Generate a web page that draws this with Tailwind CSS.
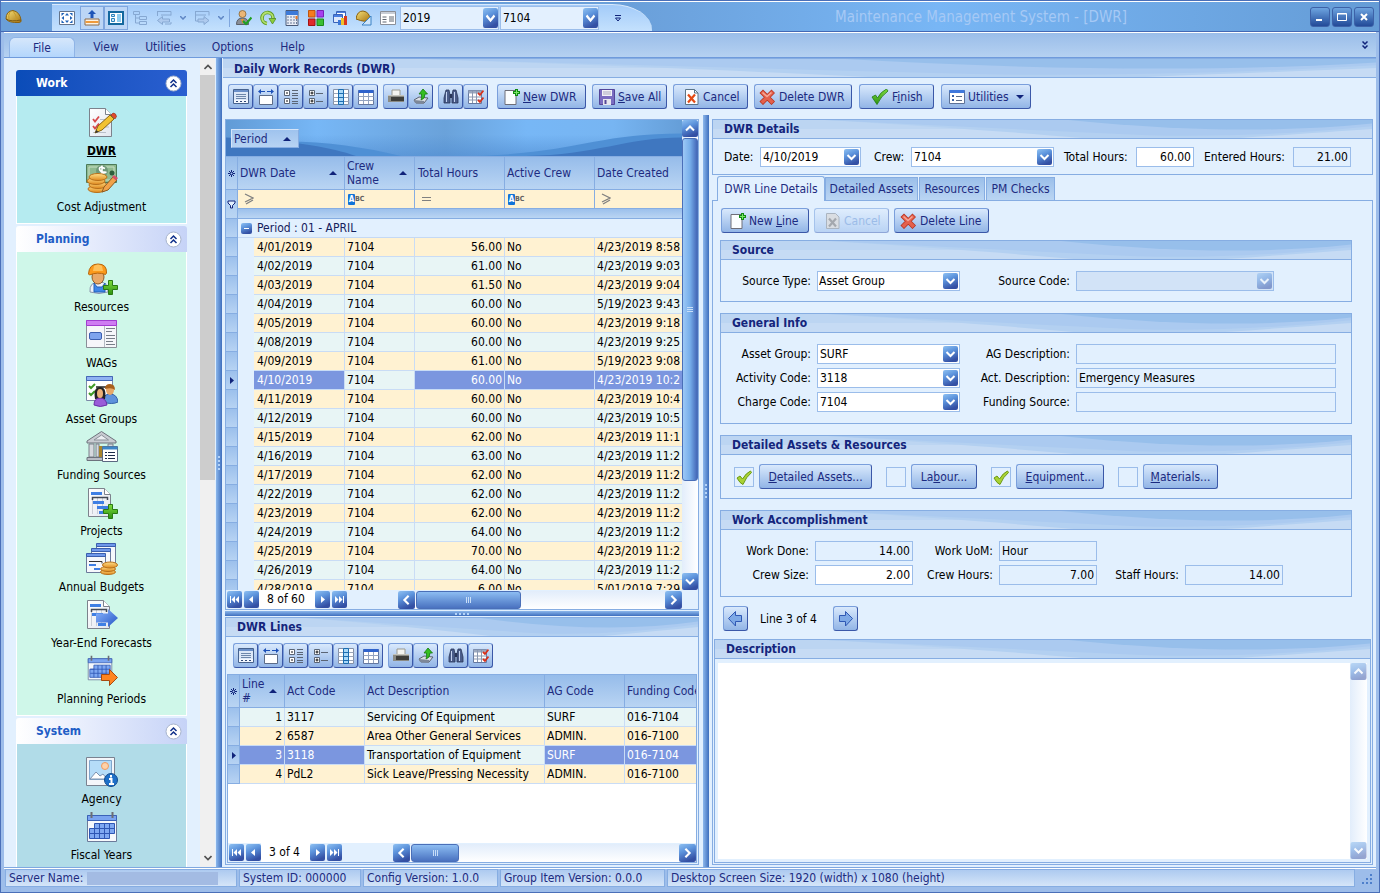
<!DOCTYPE html>
<html lang="en">
<head>
  <meta charset="UTF-8" />
  <meta name="viewport" content="width=device-width, initial-scale=1.0" />
  <title>Maintenance Management System - [DWR]</title>
  <script src="https://cdn.jsdelivr.net/npm/@tailwindcss/browser@4"></script>
</head>
<body class="h-screen flex flex-col overflow-hidden bg-[#9dbdea] border border-[#4a6fb8] text-[12px] leading-4 text-black font-['DejaVu_Sans_Condensed','Noto_Sans',sans-serif]">

  <!-- icon sprites -->
  <svg class="absolute w-0 h-0" aria-hidden="true">
    <defs>
      <linearGradient id="gCap" x1="0" y1="0" x2=".4" y2="1"><stop offset="0" stop-color="#8fc1f2"/><stop offset=".45" stop-color="#5c93dc"/><stop offset="1" stop-color="#3450a4"/></linearGradient>
      <linearGradient id="gGold" x1="0" y1="0" x2="0" y2="1"><stop offset="0" stop-color="#ffe08a"/><stop offset="1" stop-color="#e08a1e"/></linearGradient>
      <linearGradient id="gHat" x1="0" y1="0" x2="1" y2="1"><stop offset="0" stop-color="#f6e27a"/><stop offset="1" stop-color="#a87412"/></linearGradient>
      <linearGradient id="gGreen" x1="0" y1="0" x2="0" y2="1"><stop offset="0" stop-color="#7fdc3e"/><stop offset="1" stop-color="#2d9210"/></linearGradient>
      <linearGradient id="gBlue" x1="0" y1="0" x2="1" y2="1"><stop offset="0" stop-color="#8db8ff"/><stop offset="1" stop-color="#2454c4"/></linearGradient>
      <linearGradient id="gPage" x1="0" y1="0" x2="1" y2="1"><stop offset="0" stop-color="#fff"/><stop offset="1" stop-color="#e2e6ee"/></linearGradient>
      <linearGradient id="gPanel" x1="0" y1="0" x2="1" y2="0"><stop offset="0" stop-color="#619bd6"/><stop offset=".2" stop-color="#77b7f6"/><stop offset=".48" stop-color="#6aa2da"/><stop offset=".66" stop-color="#77b7f6"/><stop offset=".85" stop-color="#77b5f2"/><stop offset="1" stop-color="#659ed8"/></linearGradient>
      <linearGradient id="gShade" x1="0" y1="0" x2="0" y2="1"><stop offset=".4" stop-color="#4f8bd0" stop-opacity="0"/><stop offset="1" stop-color="#4f8bd0" stop-opacity=".6"/></linearGradient>
    </defs>

    <symbol id="wave" viewBox="0 0 100 20" preserveAspectRatio="none">
      <path d="M0 0H100V20H0z" fill="#bcd5f2"/>
      <path d="M0 10H100V20H0z" fill="#c6dbf4"/>
      <path d="M17 0H100V10Q92 14 80 20H56Q40 10 17 0z" fill="#b3d0f1"/>
      <path d="M17 0H100V7Q82 20 66 17Q42 9 17 0z" fill="#abcaf0"/>
      <path d="M54 0H100V4Q80 19 54 0z" fill="#97bfeb"/>
    </symbol>
    <symbol id="groupwave" viewBox="0 0 456 37" preserveAspectRatio="none">
      <path d="M0 0H456V37H0z" fill="url(#gPanel)"/>
      <path d="M0 0H456V37H0z" fill="url(#gShade)"/>
      <path d="M60 22C100 22 140 28 175 37H60zM250 37C350 34 370 14 456 14V37z" fill="#4f90d5"/>
      <path d="M0 18C50 20 100 26 130 37H0zM300 37C370 36 400 18 456 18V37z" fill="#3f77c0"/>
    </symbol>

    <symbol id="drop" viewBox="0 0 15 16"><rect width="15" height="16" rx="2" fill="url(#gCap)"/><path d="M3.500 6l4 4 4-4" fill="none" stroke="#fff" stroke-width="2"/></symbol>
    <symbol id="capUp" viewBox="0 0 16 17"><rect width="16" height="17" rx="2" fill="url(#gCap)"/><path d="M4 10.500l4-4 4 4" fill="none" stroke="#fff" stroke-width="2"/></symbol>
    <symbol id="capDown" viewBox="0 0 16 17"><rect width="16" height="17" rx="2" fill="url(#gCap)"/><path d="M4 6.500l4 4 4-4" fill="none" stroke="#fff" stroke-width="2"/></symbol>
    <symbol id="capLeft" viewBox="0 0 16 17"><rect width="16" height="17" rx="2" fill="url(#gCap)"/><path d="M10 4.500l-4 4 4 4" fill="none" stroke="#fff" stroke-width="2"/></symbol>
    <symbol id="capRight" viewBox="0 0 16 17"><rect width="16" height="17" rx="2" fill="url(#gCap)"/><path d="M6 4.500l4 4-4 4" fill="none" stroke="#fff" stroke-width="2"/></symbol>
    <symbol id="navFirst" viewBox="0 0 15 17"><rect width="15" height="17" rx="2" fill="url(#gCap)"/><path d="M3 5h1v7H3zM8 5v7L4.500 8.500zM12 5v7L8.500 8.500z" fill="#fff"/></symbol>
    <symbol id="navPrev" viewBox="0 0 15 17"><rect width="15" height="17" rx="2" fill="url(#gCap)"/><path d="M9 5v7L5 8.500z" fill="#fff"/></symbol>
    <symbol id="navNext" viewBox="0 0 15 17"><rect width="15" height="17" rx="2" fill="url(#gCap)"/><path d="M6 5v7l4-3.500z" fill="#fff"/></symbol>
    <symbol id="navLast" viewBox="0 0 15 17"><rect width="15" height="17" rx="2" fill="url(#gCap)"/><path d="M11 5h1v7h-1zM3 5v7l3.500-3.500zM7 5v7l3.500-3.500z" fill="#fff"/></symbol>
    <symbol id="sortUp" viewBox="0 0 8 4"><path d="M4 0l4 4H0z" fill="#10237a"/></symbol>
    <symbol id="star" viewBox="0 0 9 9"><path d="M4.500 1v7M1 4.500h7M2 2l5 5M7 2L2 7" stroke="#10237a" stroke-width="1"/><circle cx="4.500" cy="4.500" r="1" fill="#a9c9ef"/></symbol>

    <!-- 16px toolbar icons -->
    <symbol id="hat" viewBox="0 0 18 18"><path d="M1 11Q1 3 8 2.500Q15 4 16 12Q17 14 14 14.500Q4 15 1 11z" fill="url(#gHat)" stroke="#8a6210"/><path d="M5 4Q3 7 4 11M8 3q3 3 4 9" fill="none" stroke="#c79a2a"/><path d="M1 11q5 3 15 1" fill="none" stroke="#7b5a14"/></symbol>
    <symbol id="fit" viewBox="0 0 16 16"><path d="M.5 1.500h15v13H.5z" fill="#fff" stroke="#64748b"/><path d="M8 3l2 2.500H6zM8 13l2-2.500H6zM2.500 8l2.500-2v4zM13.500 8L11 6v4zM2.500 3h3l-3 3zM13.500 3h-3l3 3zM2.500 13h3l-3-3zM13.500 13h-3l3-3z" fill="#1e62b8"/></symbol>
    <symbol id="outbox" viewBox="0 0 16 16"><path d="M1 9h14v6H1z" fill="#fdf3e4" stroke="#8a6a4a"/><path d="M1.500 11h13v2h-13z" fill="#ef9a3c"/><path d="M8 0l4 4H9.500v4h-3V4H4z" fill="#1d55b8"/></symbol>
    <symbol id="sidepane" viewBox="0 0 16 16"><path d="M1 2h14v12H1z" fill="#fff" stroke="#14689e" stroke-width="2"/><path d="M3.500 4.500h3v2h-3zM3.500 8.500h3v3h-3z" fill="#cde6f7" stroke="#2c83bd"/><path d="M9 4h4v8H9z" fill="#8fcdf0"/></symbol>
    <symbol id="treeg" viewBox="0 0 16 16"><path d="M1.500 1.500h6v3h-6zM7.500 6.500h7v3h-7zM7.500 11.500h7v3h-7zM3.500 5v8H7M3.500 8H7" fill="none" stroke="#86a8d2"/></symbol>
    <symbol id="winback" viewBox="0 0 16 16"><path d="M1 1.500h14v4M1.500 2v4M5 5h10M15 12v2H9" fill="none" stroke="#86a8d2"/><path d="M1.500 10.500l5-4v2.500h7v3h-7V14.500z" fill="#aecaee" stroke="#86a8d2"/></symbol>
    <symbol id="winfwd" viewBox="0 0 16 16"><path d="M1 1.500h14v4M1.500 2v9H4M2 5h10" fill="none" stroke="#86a8d2"/><path d="M15 10.500l-5-4v2.500H4v3h6v2.500z" fill="#aecaee" stroke="#86a8d2"/></symbol>
    <symbol id="usercheck" viewBox="0 0 16 16"><path d="M.5 14.500Q.5 8 6.500 8t6 6.500z" fill="#8a8f98" stroke="#5b6068"/><path d="M5 9l1.500 5L8 9z" fill="#e9952c"/><circle cx="6.500" cy="4" r="3.500" fill="#eab676" stroke="#8a6430" stroke-width=".8"/><path d="M7 11l3 3L15.500 7.500" fill="none" stroke="#21a022" stroke-width="2.200"/></symbol>
    <symbol id="refresh" viewBox="0 0 16 16"><path d="M7 13.500A5.500 5.500 0 1 1 13 8.500" fill="none" stroke="#5c9a20" stroke-width="3.600"/><path d="M7 13.500A5.500 5.500 0 1 1 13 8.500" fill="none" stroke="#b4e070" stroke-width="1.800"/><path d="M9 8.500h7L12.500 14z" fill="#8ccc3c" stroke="#4a8718" stroke-width=".7"/></symbol>
    <symbol id="calc" viewBox="0 0 16 16"><path d="M2 .5h12v15H2z" fill="#e7ecf5" stroke="#4a5a78"/><path d="M2 1h12v4H2z" fill="#3d7ad8"/><path d="M4 6v9M7 6v9M10 6v9M12.500 6v9" stroke="#6d7d9a" stroke-dasharray="2 1"/><path d="M11.500 6h2v3h-2z" fill="#e87a2a"/></symbol>
    <symbol id="tiles" viewBox="0 0 16 16"><path d="M.5.500h6.500v6.500H.5z" fill="#f57c1f" stroke="#c05510"/><path d="M9 .5h6.500v6.500H9z" fill="#a63ff0" stroke="#7920b5"/><path d="M.5 9H7v6.500H.5z" fill="#e02a2a" stroke="#a31313"/><path d="M9 9h6.500v6.500H9z" fill="#3bbf34" stroke="#1d8a1a"/></symbol>
    <symbol id="cascade" viewBox="0 0 16 16"><path d="M4.500 1.500h9v8h-9z" fill="#fff" stroke="#3a63b8"/><path d="M1.500 4.500h9v8h-9z" fill="#dfe9fb" stroke="#3a63b8"/><path d="M2 5h8v2H2zM5 2h8v1H5z" fill="#4b7fe0"/><path d="M9 8h3v7H9z" fill="#f0c22a"/><path d="M12 6h3v9h-3z" fill="#d8391e"/><path d="M6 10h3v5H6z" fill="#3c77d8"/></symbol>
    <symbol id="hatruler" viewBox="0 0 16 16"><path d="M0 9Q1 1 7 1Q14 2 14 10Q10 13 0 9z" fill="url(#gHat)" stroke="#8a6210"/><path d="M15 6v9H6z" fill="#cfe6fb" stroke="#3b82c4"/></symbol>
    <symbol id="form" viewBox="0 0 16 16"><path d="M.5 1.500h15v13H.5z" fill="#fff" stroke="#8a8f98"/><path d="M1 2h14v2H1z" fill="#c9ced6"/><path d="M2.500 7h4M2.500 9.500h4M9 7h5M9 9h5M9 11h5M2.500 12h4" stroke="#5f6670"/></symbol>

    <symbol id="t1" viewBox="0 0 16 16"><path d="M.5.500h15v14H.5z" fill="#dce8f8" stroke="#46628e"/><path d="M1 1h14v2H1z" fill="#6a8fc8"/><path d="M3 5.500h10M3 7.500h10M3 9.500h10" stroke="#6d87ab"/><path d="M1 11h14v3H1z" fill="#f4f8ff"/><path d="M3 12.500h10" stroke="#2f4a78" stroke-dasharray="2 2"/></symbol>
    <symbol id="t2" viewBox="0 0 16 16"><path d="M1.500 6.500h13v9h-13z" fill="#fff" stroke="#5c6c88"/><path d="M0 2.500L3 0v2h4v1H3v2zM16 2.500L13 0v2H9v1h4v2z" fill="#1c50b8"/></symbol>
    <symbol id="t3" viewBox="0 0 16 16"><path d="M1.500 1.500h5v5h-5zM1.500 9.500h5v5h-5z" fill="#fff" stroke="#5a6575"/><path d="M3 4h2M3 12h2" stroke="#111"/><path d="M9 1.500h6M9 4.500h6M9 6.500h6M9 9.500h6M9 12.500h6M9 14.500h6" stroke="#5a6575"/></symbol>
    <symbol id="t4" viewBox="0 0 16 16"><path d="M1.500 1.500h5v5h-5zM1.500 9.500h5v5h-5z" fill="#fff" stroke="#5a6575"/><path d="M2.500 4h3M4 2.500v3M2.500 12h3M4 10.500v3" stroke="#111"/><path d="M8 4.500h7M8 12.500h7" stroke="#5a6575"/></symbol>
    <symbol id="t5" viewBox="0 0 16 16"><path d="M.5.500h15v15H.5z" fill="#fff" stroke="#8592a8"/><path d="M.5 4.500h15M.5 8.500h15M.5 12.500h15" stroke="#9aa5b8"/><path d="M5.500.500h5v15h-5z" fill="#a8d8f8" stroke="#1a6cb0"/><path d="M5.500 4.500h5M5.500 8.500h5M5.500 12.500h5" stroke="#1a6cb0"/></symbol>
    <symbol id="t6" viewBox="0 0 16 16"><path d="M.5 1.500h15v14H.5z" fill="#fff" stroke="#6478a0"/><path d="M.5 1h15v3H.5z" fill="#2f63cc"/><path d="M.5 7.500h15M.5 11.500h15M5.500 4v11M10.500 4v11" stroke="#93a3c0"/></symbol>
    <symbol id="print" viewBox="0 0 16 16"><path d="M4 1h8v6H4z" fill="#f4f4f0" stroke="#9a9a90"/><path d="M0 6h16v7H0z" fill="#8b8b84"/><path d="M3 8h13v4H3z" fill="#3e3e3a"/><path d="M0 6.500h16" stroke="#c4c4bc"/></symbol>
    <symbol id="export" viewBox="0 0 16 16"><path d="M1 11l5-3 9 1-4 5H3z" fill="#d8dce4" stroke="#5a6270"/><path d="M1 11l10 1v3l-9-1z" fill="#7d8798"/><path d="M10 0l4.500 5H12q0 5-4 6 1-2 .5-6H6z" fill="#35bf22" stroke="#157a0c" stroke-width=".8"/></symbol>
    <symbol id="binoc" viewBox="0 0 16 16"><path d="M3 1h3l1 5v8H1V9zM10 1h3l2 8v5H9V6z" fill="#4b5d8a" stroke="#2a3658" stroke-width=".8"/><path d="M7 5h2v4H7z" fill="#2a3658"/><path d="M3.500 3v10M11.500 3v10" stroke="#c5d3f0"/></symbol>
    <symbol id="gridcheck" viewBox="0 0 16 16"><path d="M.5 1.500h13v13H.5z" fill="#fff" stroke="#6478a0"/><path d="M.5 1.500h13v3H.5z" fill="#9aa8bf"/><path d="M.5 8h13M.5 11h13M4.500 2v12M8.500 2v12" stroke="#8a98b0"/><path d="M10 4l2 2 3.500-4.500M10 11l2 2 3.500-4.500" fill="none" stroke="#d8301a" stroke-width="1.800"/></symbol>
    <symbol id="newdoc" viewBox="0 0 16 16"><path d="M1 1.500h11v14H1z" fill="#fbfdff" stroke="#6e6e78"/><path d="M11 0h3v2h2v3h-2v2h-3V5H9V2h2z" fill="#128a12"/><path d="M12 1h1v2h2v1h-2v2h-1V4h-2V3h2z" fill="#7be868"/></symbol>
    <symbol id="save" viewBox="0 0 16 16"><path d="M.5.500h15v15H.5z" fill="#7a6cc0" stroke="#544699"/><path d="M3 1h10v6H3z" fill="#f2f2f8"/><path d="M4 3h8M4 5h8" stroke="#a9a9be"/><path d="M4 10h8v6H4z" fill="#e6e6ee"/><path d="M5.500 11h2v4h-2z" fill="#544699"/></symbol>
    <symbol id="cancel" viewBox="0 0 16 16"><path d="M1.500.500h9l3.500 3.500v11.500H1.500z" fill="#fdfdff" stroke="#5a7488"/><path d="M10.500.500V4H14" fill="none" stroke="#5a7488"/><path d="M4 5.500l7 8M11 5.500l-7 8" stroke="#e34a14" stroke-width="2.200"/></symbol>
    <symbol id="cancelg" viewBox="0 0 16 16"><path d="M1.500.500h9l3.500 3.500v11.500H1.500z" fill="#d9dde2" stroke="#aab4c0"/><path d="M4 5.500l7 8M11 5.500l-7 8" stroke="#a4a8ae" stroke-width="2.200"/></symbol>
    <symbol id="delete" viewBox="0 0 16 16"><path d="M4 4l8.500 8.500M12.500 4L4 12.500" stroke="#b5321f" stroke-width="5" stroke-linecap="square"/><path d="M4 4l8.500 8.500M12.500 4L4 12.500" stroke="#e4604c" stroke-width="3.600" stroke-linecap="square"/><path d="M3.500 3.500l4.500 4 4.500-4" fill="none" stroke="#f6a696" stroke-width="1.600"/></symbol>
    <symbol id="finish" viewBox="0 0 18 16"><path d="M1 8l5 7.500Q10 7 17 2l-1.500-2Q9.500 3 6.500 9L4.500 6z" fill="url(#gGreen)" stroke="#1f7a10" stroke-width=".8"/></symbol>
    <symbol id="utils" viewBox="0 0 16 16"><path d="M.5 1.500h15v13H.5z" fill="#fff" stroke="#5d7298"/><path d="M.5 1h15v3H.5z" fill="#3f78dc"/><path d="M3 7h2M3 11h2" stroke="#3a63a8" stroke-width="2"/><path d="M7 7.500h6M7 11.500h6" stroke="#5a6a85"/></symbol>
    <symbol id="tick" viewBox="0 0 18 18"><path d="M2 10l3-2 2.500 3Q11 5 15.500 3l1 1.500Q11 9 8 16.500q-3-1-6-6.500z" fill="#a9d234" stroke="#6b9a12"/></symbol>
    <symbol id="arrL" viewBox="0 0 17 17"><path d="M1.500 8.500l7-7v4h6v6h-6v4.500z" fill="#7ea9e6" stroke="#2f58b4"/></symbol>
    <symbol id="arrR" viewBox="0 0 17 17"><path d="M15.500 8.500l-7-7v4h-6v6h6v4.500z" fill="#7ea9e6" stroke="#2f58b4"/></symbol>

    <!-- 32px sidebar icons -->
    <symbol id="page" viewBox="0 0 32 32"><path d="M3.500 1.500h16l6 6v22h-22z" fill="url(#gPage)" stroke="#7c828c"/><path d="M19.500 1.500v6h6" fill="#fff" stroke="#7c828c"/></symbol>
    <symbol id="coins" viewBox="0 0 32 32"><g fill="url(#gGold)" stroke="#b8701a"><ellipse cx="11" cy="26" rx="9" ry="3.500"/><ellipse cx="12" cy="22" rx="9" ry="3.500"/><ellipse cx="10" cy="18" rx="9" ry="3.500"/><ellipse cx="12" cy="14" rx="9" ry="3.500"/></g></symbol>
    <symbol id="gantt" viewBox="0 0 32 32"><use href="#page"/><path d="M7.500 10v17M12.500 10v17M17.500 10v17" stroke="#c9cdd6"/><path d="M7.500 13v-2.500h15V13" fill="none" stroke="#444a56" stroke-width="1.500"/><path d="M6 5h11v3H6zM8 14h11v3H8zM12 19h11v3H12zM14 24h8v3h-8z" fill="#3f7fe4"/></symbol>
    <symbol id="plus" viewBox="0 0 32 32"><path d="M22.500 17.500h4v5h5v4h-5v5h-4v-5h-5v-4h5z" fill="url(#gGreen)" stroke="#2a7a12"/></symbol>
    <symbol id="calendar" viewBox="0 0 32 32"><path d="M1.500 4.500h29v26h-29z" fill="#f6f8fc" stroke="#6b7a9a"/><path d="M1.500 4.500h29v5h-29z" fill="#7aa4f0" stroke="#3b62b8"/><path d="M5.500 1v6M26.500 1v6" stroke="#6d6d75" stroke-width="2"/><path d="M8.500 12.500h20v10h-5v5h-20v-10h5z" fill="#7fa8f2" stroke="#2e56b4"/><path d="M13.500 12.500v15M18.500 12.500v15M23.500 12.500v10M8.500 17v10.500M4 17.500h24.500M4 22.500h20" stroke="#2e56b4" fill="none"/></symbol>

    <symbol id="s-dwr" viewBox="0 0 32 32"><use href="#page"/><path d="M7 12l2 2.500 4-5M7 19l2 2.500 4-5" fill="none" stroke="#d8484a" stroke-width="1.800"/><path d="M14 12.500h9M14 20h9M7 25.500h13" stroke="#b9bfca"/><path d="M9 26l3-7 12-11 4 4-12 11z" fill="#f2c232" stroke="#8a6414"/><path d="M25 8l2-2q3 0 3.500 3.500L29 12z" fill="#e2492c" stroke="#8f2a18" stroke-width=".6"/><path d="M9 26l1.500-3 2 2z" fill="#333"/></symbol>
    <symbol id="s-cost" viewBox="0 0 32 32"><path d="M.5 1.500h30v18H.5z" fill="#8fba90" stroke="#4c7a58"/><path d="M3 4h25v13H3z" fill="none" stroke="#c8dfc4"/><circle cx="16" cy="8" r="6" fill="#6f9878"/><path d="M19 5.500Q13 3 13.500 6T18.500 9T13 11M16 2.500v11" fill="none" stroke="#fff" stroke-width="1.600"/><circle cx="26" cy="10" r="2.500" fill="#2f5d3c"/><use href="#coins"/><path d="M16 29l2-5 9-10 4 3-9 10z" fill="#f0a24a" stroke="#8f5a1e"/><path d="M26 14l2-2 4 3-2 2.500z" fill="#d8506a"/></symbol>
    <symbol id="s-res" viewBox="0 0 32 32"><path d="M4 29q-1-10 9-10t9 10q-9 3-18 0z" fill="#eef2fa" stroke="#8793aa"/><path d="M8 20v9h11v-9l-3 4h-5z" fill="#3f86e8" stroke="#2360b8"/><ellipse cx="12" cy="14" rx="6" ry="7" fill="#e9a868" stroke="#8f5a28"/><path d="M2.500 11Q3 1 12 1T20.500 10l-1 1.500q-8-3-16 .5z" fill="#fb9a1c" stroke="#b8640a"/><path d="M8 3q4-3 8 0l1 5H7z" fill="#ffc05a"/><use href="#plus"/></symbol>
    <symbol id="s-wag" viewBox="0 0 32 32"><path d="M.5 1.500h30v27H.5z" fill="#f6f6fa" stroke="#8a8f98"/><path d="M.5 1.500h30v5H.5z" fill="#cf7cf2" stroke="#a23cd0"/><path d="M18.500 7v21" stroke="#b5bac4"/><rect x="3.500" y="13.500" width="12" height="7" rx="1.500" fill="#7fa4ee" stroke="#3c5fb0"/><path d="M20 9.500h9M20 12.500h6M20 16.500h9M20 19.500h9M20 22.500h7M20 25.500h9" stroke="#777d88"/></symbol>
    <symbol id="s-asset" viewBox="0 0 32 32"><path d="M.5 1.500h26v24H.5z" fill="#fff" stroke="#7c8aa8"/><path d="M.5 1.500h26v4H.5z" fill="#8fb2f2" stroke="#4568b8"/><path d="M3 11l2 2 4-4M3 18l2 2 4-4" fill="none" stroke="#3f9a26" stroke-width="2"/><path d="M10 12h10" stroke="#222" stroke-width="1.500"/><path d="M17 27q0-8 7-8t8 8q-6 3-15 0z" fill="#5f92dc" stroke="#3461a8"/><ellipse cx="24" cy="15" rx="4" ry="5" fill="#e9a868"/><path d="M19 14q0-5 5-5t5 6q-3-3-10-1z" fill="#a8601c"/><path d="M9 24Q7 12 14 12T19 24z" fill="#222"/><path d="M8 30q0-7 6-7t7 7q-7 3-13 0z" fill="#9a5cd8" stroke="#6a30a8"/><ellipse cx="14" cy="18.500" rx="3" ry="4.500" fill="#eab078"/></symbol>
    <symbol id="s-fund" viewBox="0 0 32 32"><path d="M1 10L15.500.500 30 10v2H1z" fill="#c9ccd2" stroke="#6d727c"/><path d="M8 9l7.500-5 7 5z" fill="#eceef2" stroke="#8b9099"/><path d="M3 13h5v13H3zM22 13h5v13h-5zM10 13h3v13h-3z" fill="#d6d9de" stroke="#7b808a"/><path d="M13 15h6v11h-6z" fill="#a8842c"/><path d="M1 26.500h28v3H1z" fill="#b9bdc5" stroke="#6d727c"/><path d="M16.500 15.500h15v15h-15z" fill="#fff" stroke="#5b6880"/><path d="M16.500 15.500h15v3h-15z" fill="#3d86c8"/><path d="M19 21.500h2M19 24.500h2M19 27.500h2M22 21.500h7M22 24.500h7M22 27.500h7" stroke="#1c2c48"/></symbol>
    <symbol id="s-proj" viewBox="0 0 32 32"><use href="#gantt" x="-1"/><use href="#plus"/></symbol>
    <symbol id="s-annual" viewBox="0 0 32 32"><g fill="#f6f8fc" stroke="#6b7a9a"><path d="M10.500 1.500h19v19h-19z"/><path d="M5.500 6.500h19v19h-19z"/><path d="M.5 11.500h19v18H.5z"/></g><g fill="#6f98ea" stroke="#3b5fae"><path d="M10.500.500h19v3h-19zM5.500 5.500h19v3h-19zM.5 10.500h19v3H.5z"/></g><path d="M3 18.500h13v2" fill="none" stroke="#333"/><path d="M3 21h7v2H3zM8 25h6v2H8z" fill="#3f7fe4"/><g fill="url(#gGold)" stroke="#b8701a"><ellipse cx="22" cy="29" rx="7.500" ry="2.500"/><ellipse cx="22" cy="26" rx="7.500" ry="2.500"/><ellipse cx="24" cy="22" rx="7.500" ry="3"/></g></symbol>
    <symbol id="s-year" viewBox="0 0 32 32"><use href="#gantt" x="-2"/><path d="M10 14.500h12V10l10 9-10 9v-4.500H10z" fill="url(#gBlue)"/></symbol>
    <symbol id="s-period" viewBox="0 0 32 32"><use href="#calendar" width="26" height="26" x="1"/><path d="M15.500 19.500h8v-5l8 8-8 8v-5h-8z" fill="#ff8420" stroke="#a84a10"/></symbol>
    <symbol id="s-agency" viewBox="0 0 32 32"><path d="M.5 2.500h28v28H.5z" fill="#f4f6fa" stroke="#7a8290"/><path d="M3.500 5.500h22v19h-22z" fill="#b5dcf8" stroke="#7fa6cc"/><circle cx="19" cy="11" r="3.500" fill="#ffd2a8" stroke="#ee9a60"/><path d="M4 24l6-7 4 4 3-2 4 5z" fill="#fff" stroke="#7f93b0"/><circle cx="25" cy="25" r="6.500" fill="#1e6fc8" stroke="#124b8e"/><path d="M25 20v2.500M23 24h2.500v5M23 29h5" stroke="#fff" stroke-width="2" fill="none"/></symbol>
    <symbol id="s-fiscal" viewBox="0 0 32 32"><use href="#calendar"/></symbol>
  </svg>

  <!-- title bar -->
  <header class="flex items-stretch h-[31px] shrink-0 border-t border-white border-b border-b-[#4468b4] bg-linear-to-r from-[#6a9fd9] via-[#78b6f5] via-68% to-[#659cd6] from-45%">
    <div class="w-[51px] flex items-center pl-1"><svg class="w-[18px] h-[18px]"><use href="#hat"/></svg></div>
    <div class="w-[600px] mt-[2px] flex items-center pl-[6px] rounded-tr-[40px_26px] bg-linear-to-b from-[#a3cbf9] to-[#c4e1fd] border-t border-[#d8e9fc]">
      <button aria-label="Full screen" class="w-[18px] h-6 flex items-center justify-center"><svg class="w-4 h-4"><use href="#fit"/></svg></button>
      <button aria-label="Ribbon" class="ml-1 w-6 h-6 flex items-center justify-center border border-[#7fa6de] bg-[#bcd6f6]"><svg class="w-4 h-4"><use href="#outbox"/></svg></button>
      <button aria-label="Navigation" class="w-6 h-6 flex items-center justify-center border border-[#7fa6de] bg-[#bcd6f6]"><svg class="w-4 h-4"><use href="#sidepane"/></svg></button>
      <span class="flex items-center ml-1 gap-2"><svg class="w-4 h-4"><use href="#treeg"/></svg><svg class="w-4 h-4"><use href="#winback"/></svg><svg class="w-[6px] h-1" viewBox="0 0 6 4"><path d="M0 0l3 3 3-3" fill="none" stroke="#5f86c4" stroke-width="1.500"/></svg><svg class="w-4 h-4"><use href="#winfwd"/></svg><svg class="w-[6px] h-1" viewBox="0 0 6 4"><path d="M0 0l3 3 3-3" fill="none" stroke="#5f86c4" stroke-width="1.500"/></svg></span>
      <span class="w-px h-[18px] bg-[#7fa6de] ml-[5px] mr-[6px]"></span>
      <span class="flex items-center gap-2">
        <svg class="w-4 h-4"><use href="#usercheck"/></svg>
        <svg class="w-4 h-4"><use href="#refresh"/></svg>
        <svg class="w-4 h-4"><use href="#calc"/></svg>
        <svg class="w-4 h-4"><use href="#tiles"/></svg>
        <svg class="w-4 h-4"><use href="#cascade"/></svg>
        <svg class="w-4 h-4"><use href="#hatruler"/></svg>
        <svg class="w-4 h-4"><use href="#form"/></svg>
      </span>
      <span class="relative ml-1 w-[99px] h-6 border border-[#9bbdea] bg-[#e3f0fe]">
        <select aria-label="Year" class="appearance-none w-full h-full pl-[2px] outline-none"><option>2019</option></select>
        <svg class="absolute right-0 top-[1px] w-[15px] h-5 pointer-events-none" viewBox="0 0 15 16" preserveAspectRatio="none"><use href="#drop"/></svg>
      </span>
      <span class="relative ml-px w-[99px] h-6 border border-[#9bbdea] bg-[#e3f0fe]">
        <select aria-label="Crew filter" class="appearance-none w-full h-full pl-[2px] outline-none"><option>7104</option></select>
        <svg class="absolute right-0 top-[1px] w-[15px] h-5 pointer-events-none" viewBox="0 0 15 16" preserveAspectRatio="none"><use href="#drop"/></svg>
      </span>
      <svg class="ml-4 w-[6px] h-[7px]" viewBox="0 0 6 7"><path d="M0 .5h6M.5 3l2.500 3 2.500-3z" fill="none" stroke="#10237a"/></svg>
    </div>
    <h1 class="flex-1 flex items-center justify-center text-[15px] text-[#a6c9f5]">Maintenance Management System - [DWR]</h1>
    <div class="flex items-center gap-[2px] pr-[5px]">
      <button aria-label="Minimize" class="w-5 h-5 rounded-[3px] border border-[#3d62a8] bg-linear-to-b from-[#6ea4e0] to-[#234a98] flex items-center justify-center"><svg class="w-[10px] h-[10px]" viewBox="0 0 10 10"><path d="M1 8h6" stroke="#fff" stroke-width="2"/></svg></button>
      <button aria-label="Maximize" class="w-5 h-5 rounded-[3px] border border-[#3d62a8] bg-linear-to-b from-[#6ea4e0] to-[#234a98] flex items-center justify-center"><svg class="w-[10px] h-[10px]" viewBox="0 0 10 10"><path d="M.5 1.500h9v7h-9zM.5 2h9" fill="none" stroke="#fff"/></svg></button>
      <button aria-label="Close" class="w-5 h-5 rounded-[3px] border border-[#3d62a8] bg-linear-to-b from-[#6ea4e0] to-[#234a98] flex items-center justify-center"><svg class="w-[10px] h-[10px]" viewBox="0 0 10 10"><path d="M2 2l6 6M8 2L2 8" stroke="#fff" stroke-width="2"/></svg></button>
    </div>
  </header>

  <!-- menu -->
  <nav class="flex items-end h-[26px] shrink-0 mx-[3px] border-t border-white border-b border-b-[#6f9bdc] bg-linear-to-b from-[#9abde9] to-[#b5d1f1] text-[#1d2b80]">
    <a href="#" class="ml-[5px] w-[66px] h-5 rounded-t-md border border-b-0 border-[#8fb4e6] bg-linear-to-b from-[#d6e7fb] to-[#b3d6fc] text-center leading-5">File</a>
    <a href="#" class="w-[62px] h-5 text-center leading-5">View</a>
    <a href="#" class="w-[57px] h-5 text-center leading-5">Utilities</a>
    <a href="#" class="w-[77px] h-5 text-center leading-5">Options</a>
    <a href="#" class="w-[43px] h-5 text-center leading-5">Help</a>
    <svg class="ml-auto mr-2 mb-2 w-[6px] h-[8px]" viewBox="0 0 6 8"><path d="M.5.500L3 3 5.500.500M.5 4.500L3 7l2.500-2.500" fill="none" stroke="#10237a" stroke-width="1.500"/></svg>
  </nav>

  <div class="flex-1 min-h-0 flex mx-[3px] border-b border-[#7fa8e0] bg-[#e2f0fe]">
    <!-- navigation pane -->
    <aside class="w-[196px] shrink-0 overflow-hidden pt-3 pl-3 pr-[13px]" id="sidebar"></aside>
    <div class="w-[15px] shrink-0 bg-[#f0f0f0] flex flex-col items-center">
      <svg class="w-2 h-[17px] shrink-0" viewBox="0 0 8 17"><path d="M.5 11L4 7.500 7.500 11" fill="none" stroke="#505050" stroke-width="1.600"/></svg>
      <div class="w-full h-1/2 bg-[#cdcdcd]"></div>
      <svg class="mt-auto w-2 h-[17px] shrink-0" viewBox="0 0 8 17"><path d="M.5 6L4 9.500 7.500 6" fill="none" stroke="#505050" stroke-width="1.600"/></svg>
    </div>
    <div class="ml-px w-[6px] mr-px shrink-0 bg-linear-to-r from-[#8db8ec] to-[#3f6fbd] flex flex-col items-center justify-center gap-[2px]">
      <i class="w-[2px] h-[2px] bg-[#b5d4f8]"></i><i class="w-[2px] h-[2px] bg-[#b5d4f8]"></i><i class="w-[2px] h-[2px] bg-[#b5d4f8]"></i><i class="w-[2px] h-[2px] bg-[#b5d4f8]"></i>
    </div>

    <main class="flex-1 min-w-0 flex flex-col">
      <div class="relative h-5 shrink-0 border-y border-[#86ade2]">
        <svg class="absolute inset-0 w-full h-full"><use href="#wave"/></svg>
        <h2 class="relative pl-[11px] leading-5 font-bold text-[#14257c]">Daily Work Records (DWR)</h2>
      </div>
      <div class="flex h-[37px] shrink-0 items-center pl-[5px] text-[#1b2a80]">
        <div class="flex items-center" data-tools></div>
        <button class="ml-1 w-[89px] h-[25px] pl-[6px] flex items-center gap-[3px] rounded-[3px] border border-[#7a9fdc] border-b-[#3b58a8] border-r-[#3b58a8] bg-linear-to-b from-[#d9e9fc] to-[#92b5e6]"><svg class="w-4 h-4"><use href="#newdoc"/></svg><span><u>N</u>ew DWR</span></button>
        <button class="ml-[6px] w-[75px] h-[25px] pl-[6px] flex items-center gap-[3px] rounded-[3px] border border-[#7a9fdc] border-b-[#3b58a8] border-r-[#3b58a8] bg-linear-to-b from-[#d9e9fc] to-[#92b5e6]"><svg class="w-4 h-4"><use href="#save"/></svg><span><u>S</u>ave All</span></button>
        <button class="ml-[6px] w-[75px] h-[25px] pl-[10px] flex items-center gap-[3px] rounded-[3px] border border-[#7a9fdc] border-b-[#3b58a8] border-r-[#3b58a8] bg-linear-to-b from-[#d9e9fc] to-[#92b5e6]"><svg class="w-4 h-4"><use href="#cancel"/></svg><span>Cancel</span></button>
        <button class="ml-[6px] w-[98px] h-[25px] pl-[4px] flex items-center gap-[4px] rounded-[3px] border border-[#7a9fdc] border-b-[#3b58a8] border-r-[#3b58a8] bg-linear-to-b from-[#d9e9fc] to-[#92b5e6]"><svg class="w-4 h-4"><use href="#delete"/></svg><span>Delete DWR</span></button>
        <button class="ml-[7px] w-[75px] h-[25px] pl-[11px] flex items-center gap-[3px] rounded-[3px] border border-[#7a9fdc] border-b-[#3b58a8] border-r-[#3b58a8] bg-linear-to-b from-[#d9e9fc] to-[#92b5e6]"><svg class="w-[18px] h-4"><use href="#finish"/></svg><span>F<u>i</u>nish</span></button>
        <button class="ml-[7px] w-[90px] h-[25px] pl-[7px] flex items-center gap-[3px] rounded-[3px] border border-[#7a9fdc] border-b-[#3b58a8] border-r-[#3b58a8] bg-linear-to-b from-[#d9e9fc] to-[#92b5e6]"><svg class="w-4 h-4"><use href="#utils"/></svg><span>Utilities</span><svg class="ml-auto mr-[6px] w-2 h-1 rotate-180"><use href="#sortUp"/></svg></button>
      </div>

      <div class="flex-1 min-h-0 flex">
        <!-- records and lines -->
        <div class="w-[479px] shrink-0 flex flex-col pl-[2px] pr-[3px] pt-1 pb-[2px]">
          <section class="flex-1 min-h-0 flex flex-col border border-[#86ade2] bg-[#e2f0fe]">
            <div class="flex-1 min-h-0 flex">
              <div class="w-[457px] overflow-hidden">
                <div class="relative h-[37px] pt-[9px] pl-[5px] border-b border-[#86ade2]">
                  <svg class="absolute inset-0 w-full h-full"><use href="#groupwave"/></svg>
                  <div class="relative w-[68px] h-[19px] pl-[2px] pr-[7px] flex items-center justify-between border border-[#d5e5f9] border-r-[#86ade2] border-b-[#86ade2] bg-linear-to-b from-[#9fc3ee] to-[#b7d3f3] text-[#1d2b80]">Period<svg class="w-2 h-1"><use href="#sortUp"/></svg></div>
                </div>
                <table class="w-[470px] table-fixed border-separate border-spacing-0 whitespace-nowrap">
                  <colgroup><col class="w-[12px]"><col class="w-[16px]"><col class="w-[91px]"><col class="w-[70px]"><col class="w-[90px]"><col class="w-[90px]"><col></colgroup>
                  <thead class="text-[#1d2b80] text-left">
                    <tr class="h-[33px] bg-linear-to-b from-[#96bcea] to-[#bad5f3]">
                      <th class="border-r border-b border-[#86ade2] p-0 font-normal"><svg class="w-[9px] h-[9px] ml-px" role="img" aria-label="Row"><use href="#star"/></svg></th>
                      <th colspan="2" class="border-r border-b border-[#86ade2] p-0 pl-[2px] pr-[7px] font-normal"><div class="flex items-center justify-between">DWR Date<svg class="w-2 h-1"><use href="#sortUp"/></svg></div></th>
                      <th class="border-r border-b border-[#86ade2] p-0 pl-[2px] pr-[7px] font-normal leading-[14px]"><div class="flex items-center justify-between"><span>Crew<br>Name</span><svg class="w-2 h-1"><use href="#sortUp"/></svg></div></th>
                      <th class="border-r border-b border-[#86ade2] p-0 pl-[3px] font-normal">Total Hours</th>
                      <th class="border-r border-b border-[#86ade2] p-0 pl-[2px] font-normal">Active Crew</th>
                      <th class="border-b border-[#86ade2] p-0 pl-[2px] font-normal">Date Created</th>
                    </tr>
                    <tr class="h-[19px] bg-[#fff2d2]">
                      <td rowspan="2" class="border-r border-b border-[#86ade2] p-0 bg-linear-to-b from-[#a3c6ef] to-[#bad5f3]"><svg class="w-[9px] h-[9px] ml-px" viewBox="0 0 9 9"><path d="M1 1h7v2L5.500 5.500V8h-2V5.500L1 3z" fill="#e2f0fe" stroke="#10237a"/></svg></td>
                      <td colspan="2" class="border-r border-b border-[#86ade2] p-0 pl-[6px]"><svg class="w-[10px] h-3" viewBox="0 0 10 12"><path d="M1 1l8 4-8 4M2 11l7-4" fill="none" stroke="#808080" stroke-width="1.300"/></svg></td>
                      <td class="border-r border-b border-[#86ade2] p-0 pl-[3px]"><span class="inline-block w-[7px] h-[11px] rounded-[1px] bg-[#1274d8] text-white text-[8px] leading-[11px] text-center font-bold align-middle">A</span><span class="text-[7px] leading-[11px] align-middle text-[#606060] font-bold">BC</span></td>
                      <td class="border-r border-b border-[#86ade2] p-0 pl-[7px]"><svg class="w-[9px] h-1" viewBox="0 0 9 4"><path d="M0 .5h9M0 3.500h9" stroke="#808080"/></svg></td>
                      <td class="border-r border-b border-[#86ade2] p-0 pl-[3px]"><span class="inline-block w-[7px] h-[11px] rounded-[1px] bg-[#1274d8] text-white text-[8px] leading-[11px] text-center font-bold align-middle">A</span><span class="text-[7px] leading-[11px] align-middle text-[#606060] font-bold">BC</span></td>
                      <td class="border-b border-[#86ade2] p-0 pl-[6px]"><svg class="w-[10px] h-3" viewBox="0 0 10 12"><path d="M1 1l8 4-8 4M2 11l7-4" fill="none" stroke="#808080" stroke-width="1.300"/></svg></td>
                    </tr>
                    <tr class="h-[10px]"><td colspan="6" class="p-0 border-b border-[#86ade2] bg-linear-to-b from-[#9cc0ec] to-[#bad5f3]"></td></tr>
                  </thead>
                  <tbody id="records"></tbody>
                </table>
              </div>
              <!-- vertical scroll bar -->
              <div class="flex-1 flex flex-col bg-linear-to-r from-[#e2edfb] to-white">
                <svg class="w-4 h-[17px] shrink-0"><use href="#capUp"/></svg>
                <div class="mt-px w-4 h-[343px] rounded-[3px] border border-[#4a6fb8] bg-linear-to-r from-[#9cc8f6] via-[#77aeea] to-[#4568b8] flex flex-col items-center justify-center gap-px">
                  <i class="w-[6px] h-px bg-[#c9def8]"></i><i class="w-[6px] h-px bg-[#c9def8]"></i><i class="w-[6px] h-px bg-[#c9def8]"></i>
                </div>
                <svg class="mt-auto w-4 h-[17px] shrink-0"><use href="#capDown"/></svg>
              </div>
            </div>
            <div class="flex items-center h-[19px] shrink-0 pr-4">
              <svg class="w-[15px] h-[17px] ml-px"><use href="#navFirst"/></svg><svg class="w-[15px] h-[17px] ml-[2px]"><use href="#navPrev"/></svg>
              <span class="bg-white h-[19px] leading-[19px] pl-2 pr-[10px]">8 of 60</span>
              <svg class="w-[15px] h-[17px]"><use href="#navNext"/></svg><svg class="w-[15px] h-[17px] ml-[2px]"><use href="#navLast"/></svg>
              <div class="ml-[51px] flex-1 flex items-center bg-linear-to-b from-[#e2edfb] to-white">
                <svg class="w-[17px] h-[18px]"><use href="#capLeft"/></svg>
                <div class="ml-px w-[105px] h-[18px] rounded-[3px] border border-[#4a6fb8] bg-linear-to-b from-[#8dbdf2] to-[#4a72c0] flex items-center justify-center gap-px"><i class="w-px h-[6px] bg-[#c9def8]"></i><i class="w-px h-[6px] bg-[#c9def8]"></i><i class="w-px h-[6px] bg-[#c9def8]"></i></div>
                <svg class="ml-auto w-[17px] h-[18px]"><use href="#capRight"/></svg>
              </div>
            </div>
          </section>

          <div class="h-[5px] my-px shrink-0 bg-linear-to-b from-[#8db8ec] to-[#3f6fbd] flex items-center justify-center gap-[2px]">
            <i class="w-[2px] h-[2px] bg-[#b5d4f8]"></i><i class="w-[2px] h-[2px] bg-[#b5d4f8]"></i><i class="w-[2px] h-[2px] bg-[#b5d4f8]"></i><i class="w-[2px] h-[2px] bg-[#b5d4f8]"></i>
          </div>

          <section class="h-[248px] shrink-0 flex flex-col border border-[#86ade2]">
            <div class="relative h-[19px] shrink-0 border-b border-[#86ade2]">
              <svg class="absolute inset-0 w-full h-full"><use href="#wave"/></svg>
              <h2 class="relative pl-[11px] leading-[18px] font-bold text-[#14257c]">DWR Lines</h2>
            </div>
            <div class="flex items-center h-[37px] shrink-0 pl-[7px]" data-tools></div>
            <div class="flex-1 min-h-0 mx-px mb-px flex flex-col border border-[#86ade2] bg-white">
              <div class="flex-1 min-h-0 overflow-hidden">
                <table class="w-[480px] table-fixed border-separate border-spacing-0 whitespace-nowrap">
                  <colgroup><col class="w-[12px]"><col class="w-[45px]"><col class="w-[80px]"><col class="w-[180px]"><col class="w-[80px]"><col></colgroup>
                  <thead class="text-[#1d2b80] text-left">
                    <tr class="h-[33px] bg-linear-to-b from-[#96bcea] to-[#bad5f3]">
                      <th class="border-r border-b border-[#86ade2] p-0"><svg class="w-[9px] h-[9px] ml-px" role="img" aria-label="Row"><use href="#star"/></svg></th>
                      <th class="border-r border-b border-[#86ade2] p-0 pl-[2px] pr-[7px] font-normal leading-[14px]"><div class="flex items-center justify-between"><span>Line<br>#</span><svg class="w-2 h-1"><use href="#sortUp"/></svg></div></th>
                      <th class="border-r border-b border-[#86ade2] p-0 pl-[2px] font-normal">Act Code</th>
                      <th class="border-r border-b border-[#86ade2] p-0 pl-[2px] font-normal">Act Description</th>
                      <th class="border-r border-b border-[#86ade2] p-0 pl-[2px] font-normal">AG Code</th>
                      <th class="border-b border-[#86ade2] p-0 pl-[2px] font-normal">Funding Code</th>
                    </tr>
                  </thead>
                  <tbody id="lines"></tbody>
                </table>
              </div>
              <div class="flex items-center h-[19px] shrink-0 bg-[#e2f0fe]">
                <svg class="w-[15px] h-[17px] ml-px"><use href="#navFirst"/></svg><svg class="w-[15px] h-[17px] ml-[2px]"><use href="#navPrev"/></svg>
                <span class="bg-white h-[19px] leading-[19px] pl-2 pr-[10px]">3 of 4</span>
                <svg class="w-[15px] h-[17px]"><use href="#navNext"/></svg><svg class="w-[15px] h-[17px] ml-[2px]"><use href="#navLast"/></svg>
                <div class="ml-[51px] flex-1 flex items-center bg-linear-to-b from-[#e2edfb] to-white">
                  <svg class="w-[17px] h-[18px]"><use href="#capLeft"/></svg>
                  <div class="ml-px w-[48px] h-[18px] rounded-[3px] border border-[#4a6fb8] bg-linear-to-b from-[#8dbdf2] to-[#4a72c0] flex items-center justify-center gap-px"><i class="w-px h-[6px] bg-[#c9def8]"></i><i class="w-px h-[6px] bg-[#c9def8]"></i><i class="w-px h-[6px] bg-[#c9def8]"></i></div>
                  <svg class="ml-auto w-[17px] h-[18px]"><use href="#capRight"/></svg>
                </div>
              </div>
            </div>
          </section>
        </div>

        <div class="w-[6px] ml-px shrink-0 bg-linear-to-r from-[#8db8ec] to-[#3f6fbd] flex flex-col items-center justify-center gap-[2px]">
          <i class="w-[2px] h-[2px] bg-[#b5d4f8]"></i><i class="w-[2px] h-[2px] bg-[#b5d4f8]"></i><i class="w-[2px] h-[2px] bg-[#b5d4f8]"></i><i class="w-[2px] h-[2px] bg-[#b5d4f8]"></i>
        </div>

        <!-- details -->
        <div class="flex-1 min-w-0 flex flex-col px-[3px] pt-1 pb-[2px]">
          <section class="shrink-0 border border-[#86ade2]">
            <div class="relative h-[19px] border-b border-[#86ade2]">
              <svg class="absolute inset-0 w-full h-full"><use href="#wave"/></svg>
              <h2 class="relative pl-[11px] leading-[18px] font-bold text-[#14257c]">DWR Details</h2>
            </div>
            <div class="flex items-center h-[35px] pl-[11px]">
              <label for="date" class="w-9">Date:</label>
              <span class="relative w-[101px] h-5 border border-[#9bbdea] bg-white">
                <input id="date" value="4/10/2019" class="block w-full h-full pl-[2px] outline-none">
                <svg class="absolute right-[1px] top-[1px] w-[15px] h-4 pointer-events-none"><use href="#drop"/></svg>
              </span>
              <label for="crew" class="ml-[13px] w-[37px]">Crew:</label>
              <span class="relative w-[143px] h-5 border border-[#9bbdea] bg-white">
                <select id="crew" class="appearance-none block w-full h-full pl-[2px] outline-none"><option>7104</option></select>
                <svg class="absolute right-[1px] top-[1px] w-[15px] h-4 pointer-events-none"><use href="#drop"/></svg>
              </span>
              <label for="total" class="ml-[10px] w-[72px]">Total Hours:</label>
              <input id="total" value="60.00" class="w-[58px] h-5 border border-[#9bbdea] bg-white pr-[2px] text-right outline-none">
              <label for="entered" class="ml-[10px] w-[89px]">Entered Hours:</label>
              <input id="entered" value="21.00" readonly class="w-[58px] h-5 border border-[#9bbdea] pr-[2px] text-right outline-none">
            </div>
          </section>

          <div class="flex items-end h-[24px] mt-px shrink-0 pl-[5px] text-[#1d2b80]" role="tablist">
            <button role="tab" aria-selected="true" class="relative z-10 -mb-px w-[108px] h-[25px] rounded-t-[3px] border border-b-0 border-[#86ade2] bg-[#e2f0fe]">DWR Line Details</button>
            <button role="tab" class="w-[93px] h-[23px] border border-b-0 border-[#86ade2] bg-linear-to-b from-[#9bbfea] to-[#bad5f3]">Detailed Assets</button>
            <button role="tab" class="ml-px w-[66px] h-[23px] border border-b-0 border-[#86ade2] bg-linear-to-b from-[#9bbfea] to-[#bad5f3]">Resources</button>
            <button role="tab" class="ml-px w-[69px] h-[23px] border border-b-0 border-[#86ade2] bg-linear-to-b from-[#9bbfea] to-[#bad5f3]">PM Checks</button>
          </div>

          <section class="flex-1 min-h-0 flex flex-col border border-[#86ade2]">
            <div class="flex gap-[5px] pt-[7px] pl-2 text-[#1b2a80]">
              <button class="w-[88px] h-[25px] pl-[8px] flex items-center gap-[3px] rounded-[3px] border border-[#7a9fdc] border-b-[#3b58a8] border-r-[#3b58a8] bg-linear-to-b from-[#d9e9fc] to-[#92b5e6]"><svg class="w-4 h-4"><use href="#newdoc"/></svg><span>New <u>L</u>ine</span></button>
              <button disabled class="w-[75px] h-[25px] pl-[10px] flex items-center gap-[3px] rounded-[3px] border border-[#a5c3ec] border-b-[#8ea6d8] border-r-[#8ea6d8] bg-linear-to-b from-[#dfedfd] to-[#b9d3f4] text-[#9cbce8]"><svg class="w-4 h-4"><use href="#cancelg"/></svg><span>Cancel</span></button>
              <button class="w-[95px] h-[25px] pl-[5px] flex items-center gap-[4px] rounded-[3px] border border-[#7a9fdc] border-b-[#3b58a8] border-r-[#3b58a8] bg-linear-to-b from-[#d9e9fc] to-[#92b5e6]"><svg class="w-4 h-4"><use href="#delete"/></svg><span>Delete Line</span></button>
            </div>

            <div class="pl-[7px] pr-5 pt-[7px] flex flex-col gap-[11px]">
              <fieldset class="border border-[#86ade2]">
                <div class="relative h-[19px] border-b border-[#86ade2]">
                  <svg class="absolute inset-0 w-full h-full"><use href="#wave"/></svg>
                  <h3 class="relative pl-[11px] leading-[18px] font-bold text-[#14257c]">Source</h3>
                </div>
                <div class="grid grid-cols-[90px_143px_104px_198px] gap-x-[6px] items-center pt-[11px] pb-[10px]">
                  <label for="stype" class="text-right">Source Type:</label>
                  <span class="relative h-5 border border-[#9bbdea] bg-white">
                    <select id="stype" class="appearance-none block w-full h-full pl-px outline-none"><option>Asset Group</option></select>
                    <svg class="absolute right-[1px] top-[1px] w-[15px] h-4 pointer-events-none"><use href="#drop"/></svg>
                  </span>
                  <label for="scode" class="text-right">Source Code:</label>
                  <span class="relative h-5 border border-[#9bbdea] bg-[#d2e3f7]">
                    <select id="scode" disabled class="appearance-none block w-full h-full outline-none"><option></option></select>
                    <svg class="absolute right-[1px] top-[1px] w-[15px] h-4 opacity-50 pointer-events-none"><use href="#drop"/></svg>
                  </span>
                </div>
              </fieldset>

              <fieldset class="border border-[#86ade2]">
                <div class="relative h-[19px] border-b border-[#86ade2]">
                  <svg class="absolute inset-0 w-full h-full"><use href="#wave"/></svg>
                  <h3 class="relative pl-[11px] leading-[18px] font-bold text-[#14257c]">General Info</h3>
                </div>
                <div class="grid grid-cols-[90px_143px_104px_260px] gap-x-[6px] gap-y-1 items-center pt-[11px] pb-[11px]">
                  <label for="ag" class="text-right">Asset Group:</label>
                  <span class="relative h-5 border border-[#9bbdea] bg-white">
                    <select id="ag" class="appearance-none block w-full h-full pl-[2px] outline-none"><option>SURF</option></select>
                    <svg class="absolute right-[1px] top-[1px] w-[15px] h-4 pointer-events-none"><use href="#drop"/></svg>
                  </span>
                  <label for="agd" class="text-right">AG Description:</label>
                  <input id="agd" readonly class="h-5 border border-[#9bbdea] pl-[2px] outline-none">
                  <label for="ac" class="text-right">Activity Code:</label>
                  <span class="relative h-5 border border-[#9bbdea] bg-white">
                    <select id="ac" class="appearance-none block w-full h-full pl-[2px] outline-none"><option>3118</option></select>
                    <svg class="absolute right-[1px] top-[1px] w-[15px] h-4 pointer-events-none"><use href="#drop"/></svg>
                  </span>
                  <label for="acd" class="text-right">Act. Description:</label>
                  <input id="acd" readonly value="Emergency Measures" class="h-5 border border-[#9bbdea] pl-[2px] outline-none">
                  <label for="cc" class="text-right">Charge Code:</label>
                  <span class="relative h-5 border border-[#9bbdea] bg-white">
                    <select id="cc" class="appearance-none block w-full h-full pl-[2px] outline-none"><option>7104</option></select>
                    <svg class="absolute right-[1px] top-[1px] w-[15px] h-4 pointer-events-none"><use href="#drop"/></svg>
                  </span>
                  <label for="fs" class="text-right">Funding Source:</label>
                  <input id="fs" readonly class="h-5 border border-[#9bbdea] pl-[2px] outline-none">
                </div>
              </fieldset>

              <fieldset class="border border-[#86ade2]">
                <div class="relative h-[19px] border-b border-[#86ade2]">
                  <svg class="absolute inset-0 w-full h-full"><use href="#wave"/></svg>
                  <h3 class="relative pl-[11px] leading-[18px] font-bold text-[#14257c]">Detailed Assets &amp; Resources</h3>
                </div>
                <div class="flex items-center gap-[14px] h-[43px] pl-[13px] text-[#1b2a80]">
                  <div class="flex items-center gap-[5px]">
                    <span class="relative w-5 h-5"><input type="checkbox" checked aria-label="Detailed Assets" class="appearance-none block w-5 h-5 border border-[#9bbdea]"><svg class="absolute inset-0 m-px w-[18px] h-[18px] pointer-events-none"><use href="#tick"/></svg></span>
                    <button class="w-[113px] h-[25px] rounded-[3px] border border-[#7a9fdc] border-b-[#3b58a8] border-r-[#3b58a8] bg-linear-to-b from-[#d9e9fc] to-[#92b5e6]"><u>D</u>etailed Assets...</button>
                  </div>
                  <div class="flex items-center gap-[5px]">
                    <input type="checkbox" aria-label="Labour" class="appearance-none block w-5 h-5 border border-[#9bbdea]">
                    <button class="w-[66px] h-[25px] rounded-[3px] border border-[#7a9fdc] border-b-[#3b58a8] border-r-[#3b58a8] bg-linear-to-b from-[#d9e9fc] to-[#92b5e6]">La<u>b</u>our...</button>
                  </div>
                  <div class="flex items-center gap-[5px]">
                    <span class="relative w-5 h-5"><input type="checkbox" checked aria-label="Equipment" class="appearance-none block w-5 h-5 border border-[#9bbdea]"><svg class="absolute inset-0 m-px w-[18px] h-[18px] pointer-events-none"><use href="#tick"/></svg></span>
                    <button class="w-[88px] h-[25px] rounded-[3px] border border-[#7a9fdc] border-b-[#3b58a8] border-r-[#3b58a8] bg-linear-to-b from-[#d9e9fc] to-[#92b5e6]"><u>E</u>quipment...</button>
                  </div>
                  <div class="flex items-center gap-[5px]">
                    <input type="checkbox" aria-label="Materials" class="appearance-none block w-5 h-5 border border-[#9bbdea]">
                    <button class="w-[75px] h-[25px] rounded-[3px] border border-[#7a9fdc] border-b-[#3b58a8] border-r-[#3b58a8] bg-linear-to-b from-[#d9e9fc] to-[#92b5e6]"><u>M</u>aterials...</button>
                  </div>
                </div>
              </fieldset>

              <fieldset class="border border-[#86ade2]">
                <div class="relative h-[19px] border-b border-[#86ade2]">
                  <svg class="absolute inset-0 w-full h-full"><use href="#wave"/></svg>
                  <h3 class="relative pl-[11px] leading-[18px] font-bold text-[#14257c]">Work Accomplishment</h3>
                </div>
                <div class="grid grid-cols-[88px_98px_74px_98px_76px_98px] gap-x-[6px] gap-y-1 items-center pt-[11px] pb-[11px]">
                  <label for="wd" class="text-right">Work Done:</label>
                  <input id="wd" readonly value="14.00" class="h-5 border border-[#9bbdea] pr-[2px] text-right outline-none">
                  <label for="uom" class="text-right">Work UoM:</label>
                  <input id="uom" readonly value="Hour" class="h-5 border border-[#9bbdea] pl-[2px] outline-none">
                  <label for="cs" class="text-right col-start-1">Crew Size:</label>
                  <input id="cs" value="2.00" class="h-5 border border-[#9bbdea] bg-white pr-[2px] text-right outline-none">
                  <label for="ch" class="text-right">Crew Hours:</label>
                  <input id="ch" readonly value="7.00" class="h-5 border border-[#9bbdea] pr-[2px] text-right outline-none">
                  <label for="sh" class="text-right">Staff Hours:</label>
                  <input id="sh" readonly value="14.00" class="h-5 border border-[#9bbdea] pr-[2px] text-right outline-none">
                </div>
              </fieldset>
            </div>

            <div class="flex items-center pl-[10px] pt-[9px] pb-[8px]">
              <button aria-label="Previous line" class="w-[25px] h-[25px] flex items-center justify-center rounded-[3px] border border-[#7a9fdc] border-b-[#3b58a8] border-r-[#3b58a8] bg-linear-to-b from-[#d9e9fc] to-[#92b5e6]"><svg class="w-[17px] h-[17px]"><use href="#arrL"/></svg></button>
              <span class="px-3 w-[85px] whitespace-nowrap">Line 3 of 4</span>
              <button aria-label="Next line" class="w-[25px] h-[25px] flex items-center justify-center rounded-[3px] border border-[#7a9fdc] border-b-[#3b58a8] border-r-[#3b58a8] bg-linear-to-b from-[#d9e9fc] to-[#92b5e6]"><svg class="w-[17px] h-[17px]"><use href="#arrR"/></svg></button>
            </div>

            <div class="flex-1 min-h-0 mx-px mb-px flex flex-col border border-[#86ade2]">
              <div class="relative h-[19px] shrink-0 border-b border-[#86ade2]">
                <svg class="absolute inset-0 w-full h-full"><use href="#wave"/></svg>
                <h2 class="relative pl-[11px] leading-[18px] font-bold text-[#14257c]"><label for="desc">Description</label></h2>
              </div>
              <div class="flex-1 min-h-0 flex m-[3px] mt-1">
                <textarea id="desc" class="flex-1 resize-none bg-white p-1 outline-none"></textarea>
                <div class="w-[17px] flex flex-col justify-between bg-linear-to-r from-[#e2edfb] to-white">
                  <svg class="w-[17px] h-[17px] opacity-50"><use href="#capUp"/></svg>
                  <svg class="w-[17px] h-[17px] opacity-50"><use href="#capDown"/></svg>
                </div>
              </div>
            </div>
          </section>
        </div>
      </div>
    </main>
  </div>

  <!-- status bar -->
  <footer class="flex h-[24px] shrink-0 mx-[3px] pb-[5px] gap-[2px] border-t border-white text-[#1d2b80]">
    <div class="ml-px w-[232px] border border-[#86ade2] bg-linear-to-b from-[#adcaf0] to-[#d5e5f8] pl-[3px] flex items-center gap-1">Server Name:<span class="w-[131px] h-[13px] bg-[#a3bbe3]"></span></div>
    <div class="w-[122px] border border-[#86ade2] bg-linear-to-b from-[#adcaf0] to-[#d5e5f8] pl-[3px]">System ID: 000000</div>
    <div class="w-[135px] border border-[#86ade2] bg-linear-to-b from-[#adcaf0] to-[#d5e5f8] pl-[3px]">Config Version: 1.0.0</div>
    <div class="w-[165px] border border-[#86ade2] bg-linear-to-b from-[#adcaf0] to-[#d5e5f8] pl-[3px]">Group Item Version: 0.0.0</div>
    <div class="flex-1 border border-[#86ade2] bg-linear-to-b from-[#adcaf0] to-[#d5e5f8] pl-[3px]">Desktop Screen Size: 1920 (width) x 1080 (height)</div>
    <svg class="w-[19px] h-[19px]" viewBox="0 0 19 19"><path d="M13 5h2v2h-2zM9 9h2v2H9zM13 9h2v2h-2zM5 13h2v2H5zM9 13h2v2H9zM13 13h2v2h-2z" fill="#4d7fcb"/></svg>
  </footer>

  <script>
    // toolbar icon buttons
    const tools = [
      [["t1", "Preview"], ["t2", "Best fit"], ["t3", "Collapse groups"], ["t4", "Expand groups"], ["t5", "Columns"], ["t6", "Grid"]],
      [["print", "Print"], ["export", "Export"]],
      [["binoc", "Find"], ["gridcheck", "Choose rows"]]
    ];
    document.querySelectorAll("[data-tools]").forEach(el => {
      el.innerHTML = tools.map(group => `<div class="flex mr-[5px]">` + group.map(([id, label]) =>
        `<button aria-label="${label}" class="w-[25px] h-[25px] flex items-center justify-center rounded-[3px] border border-[#7a9fdc] border-b-[#3b58a8] border-r-[#3b58a8] bg-linear-to-b from-[#d9e9fc] to-[#92b5e6]"><svg class="w-4 h-4"><use href="#${id}"/></svg></button>`
      ).join("") + `</div>`).join("");
    });

    // navigation groups
    const nav = [
      { name: "Work", head: "bg-linear-to-r from-[#0a4cb8] to-[#2a5fd0] text-white", body: "bg-[#b5ebf0]", items: [["s-dwr", "DWR"], ["s-cost", "Cost Adjustment"]] },
      { name: "Planning", head: "bg-linear-to-r from-white to-[#c6d3f7] text-[#215dc6]", body: "bg-[#cff7e9]", items: [["s-res", "Resources"], ["s-wag", "WAGs"], ["s-asset", "Asset Groups"], ["s-fund", "Funding Sources"], ["s-proj", "Projects"], ["s-annual", "Annual Budgets"], ["s-year", "Year-End Forecasts"], ["s-period", "Planning Periods"]] },
      { name: "System", head: "bg-linear-to-r from-white to-[#c6d3f7] text-[#215dc6]", body: "bg-[#b1dce8]", items: [["s-agency", "Agency"], ["s-fiscal", "Fiscal Years"]] }
    ];
    document.getElementById("sidebar").innerHTML = nav.map(g => `
      <section class="mb-[2px]">
        <h2 class="flex items-center justify-between h-[26px] pl-5 pr-[5px] rounded-t-[3px] font-bold ${g.head}">${g.name}
          <svg class="w-[17px] h-[17px]" viewBox="0 0 17 17"><circle cx="8.500" cy="8.500" r="7.500" fill="#fff" stroke="#a8b4cc"/><path d="M5.500 8l3-3 3 3M5.500 12l3-3 3 3" fill="none" stroke="#10308a" stroke-width="1.500"/></svg>
        </h2>
        <div class="pt-[11px] pb-1 border border-t-0 border-white ${g.body}">
          ${g.items.map(([icon, label]) => `<a href="#" class="flex flex-col items-center h-14"><svg class="w-8 h-8 shrink-0"><use href="#${icon}"/></svg><span class="leading-6 ${label === "DWR" ? "font-bold underline" : ""}">${label}</span></a>`).join("")}
        </div>
      </section>`).join("");

    // daily records
    const records = [
      ["4/01/2019", "56.00", "4/23/2019 8:58"], ["4/02/2019", "61.00", "4/23/2019 9:03"], ["4/03/2019", "61.50", "4/23/2019 9:04"],
      ["4/04/2019", "60.00", "5/19/2023 9:43"], ["4/05/2019", "60.00", "4/23/2019 9:18"], ["4/08/2019", "60.00", "4/23/2019 9:25"],
      ["4/09/2019", "61.00", "5/19/2023 9:08"], ["4/10/2019", "60.00", "4/23/2019 10:2"], ["4/11/2019", "60.00", "4/23/2019 10:4"],
      ["4/12/2019", "60.00", "4/23/2019 10:5"], ["4/15/2019", "62.00", "4/23/2019 11:1"], ["4/16/2019", "63.00", "4/23/2019 11:2"],
      ["4/17/2019", "62.00", "4/23/2019 11:2"], ["4/22/2019", "62.00", "4/23/2019 11:2"], ["4/23/2019", "62.00", "4/23/2019 11:2"],
      ["4/24/2019", "64.00", "4/23/2019 11:2"], ["4/25/2019", "70.00", "4/23/2019 11:2"], ["4/26/2019", "64.00", "4/23/2019 11:2"],
      ["4/28/2019", "6.00", "5/01/2019 7:29"]
    ];
    const marker = `<svg class="w-1 h-[7px] ml-1" viewBox="0 0 4 7"><path d="M0 0l4 3.500L0 7z" fill="#10237a"/></svg>`;
    const gutter = on => `<td class="p-0 border-r border-b border-[#86ade2] bg-linear-to-b from-[#9cc0ec] to-[#b7d3f3]">${on ? marker : ""}</td>`;
    document.getElementById("records").innerHTML =
      `<tr class="h-[19px]">${gutter(false)}<td colspan="6" class="p-0 pl-[3px] border-b border-[#c5d9f4] bg-[#e2f0fe] text-[#14205c]"><div class="flex items-center gap-[5px]"><svg class="w-[11px] h-[11px]" viewBox="0 0 11 11"><rect width="11" height="11" rx="2" fill="url(#gCap)"/><path d="M3 5.500h5" stroke="#fff"/></svg>Period : 01 - APRIL</div></td></tr>` +
      records.map(([date, hours, created], i) => {
        const on = i === 7;
        const row = on ? "bg-[#7b96df] text-white" : i % 2 ? "bg-[#e8f5f5]" : "bg-[#fff2d2]";
        return `<tr class="h-[19px]">${gutter(on)}<td class="p-0 bg-[#e2f0fe]"></td>
          <td class="p-0 pl-[3px] border-r border-b border-[#c9dcf5] ${row}">${date}</td>
          <td class="p-0 pl-[2px] border-r border-b border-[#c9dcf5] ${on ? "bg-[#e8f5f5]" : row}">7104</td>
          <td class="p-0 pr-[2px] text-right border-r border-b border-[#c9dcf5] ${row}">${hours}</td>
          <td class="p-0 pl-[2px] border-r border-b border-[#c9dcf5] ${row}">No</td>
          <td class="p-0 pl-[2px] border-b border-[#c9dcf5] ${row}">${created}</td></tr>`;
      }).join("");

    // lines of the selected record
    const lines = [
      [1, "3117", "Servicing Of Equipment", "SURF", "016-7104"],
      [2, "6587", "Area Other General Services", "ADMIN.", "016-7100"],
      [3, "3118", "Transportation of Equipment", "SURF", "016-7104"],
      [4, "PdL2", "Sick Leave/Pressing Necessity", "ADMIN.", "016-7100"]
    ];
    document.getElementById("lines").innerHTML = lines.map(([n, code, text, ag, fund], i) => {
      const on = i === 2;
      const row = on ? "bg-[#7b96df] text-white" : i % 2 ? "bg-[#fff2d2]" : "bg-[#e8f5f5]";
      return `<tr class="h-[19px]">${gutter(on)}
        <td class="p-0 pr-[2px] text-right border-r border-b border-[#c9dcf5] ${row}">${n}</td>
        <td class="p-0 pl-[2px] border-r border-b border-[#c9dcf5] ${row}">${code}</td>
        <td class="p-0 pl-[2px] border-r border-b border-[#c9dcf5] ${on ? "bg-[#e8f5f5]" : row}">${text}</td>
        <td class="p-0 pl-[2px] border-r border-b border-[#c9dcf5] ${row}">${ag}</td>
        <td class="p-0 pl-[2px] border-b border-[#c9dcf5] ${row}">${fund}</td></tr>`;
    }).join("");
  </script>
</body>
</html>
